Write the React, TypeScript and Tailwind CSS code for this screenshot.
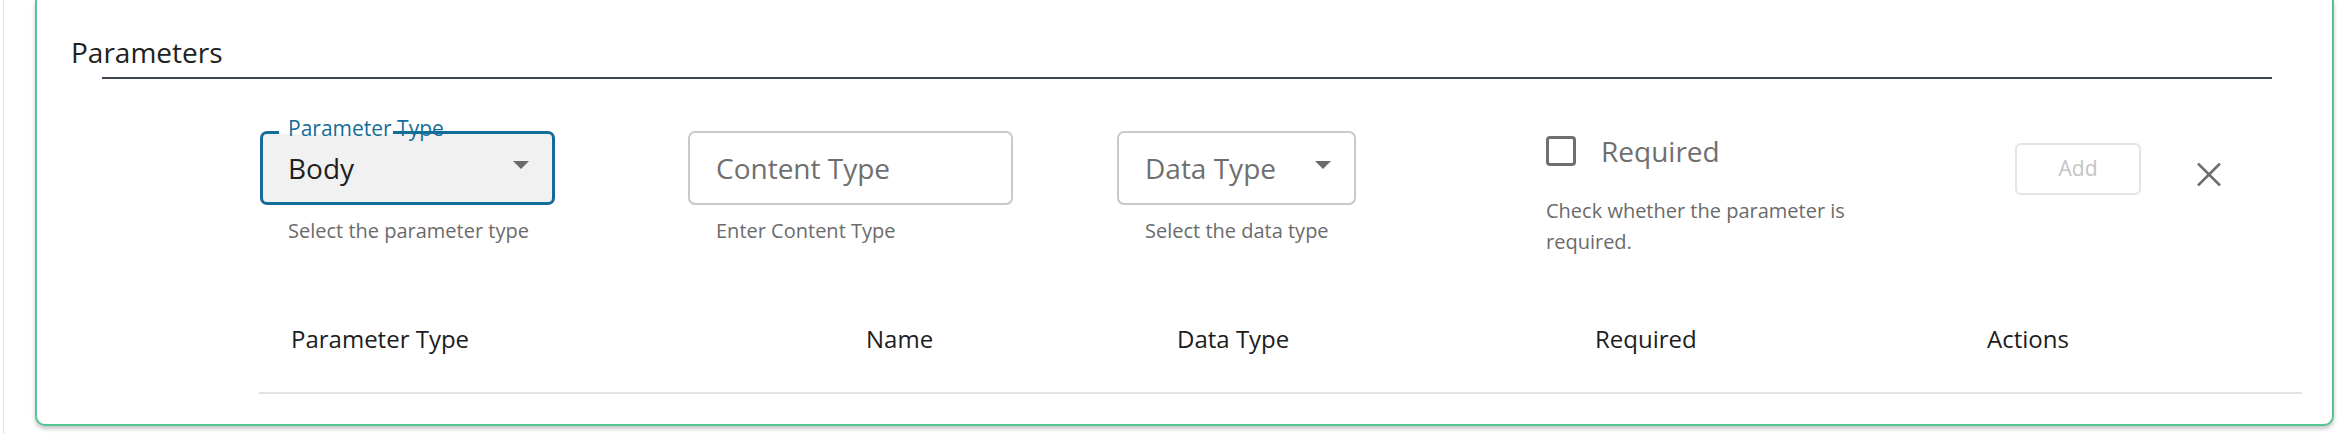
import type { ReactNode } from "react";

const FONT = "font-['Open_Sans',sans-serif]";

function Caret() {
	return (
		<svg width="16" height="8" viewBox="0 0 16 8" className="-mt-[6px] shrink-0">
			<path d="M0 0h16L8 8z" fill="#6b6b6b" />
		</svg>
	);
}

function CloseIcon() {
	return (
		<svg width="24" height="23" viewBox="0 0 24 23" className="shrink-0">
			<path d="M1 0.5 23 22.5M23 0.5 1 22.5" stroke="#6e6e6e" strokeWidth="2.6" fill="none" />
		</svg>
	);
}

function Helper({ children }: { children: ReactNode }) {
	return <div className="mt-[12px] pl-[28px] text-[20px] leading-[27px] text-[#6b6b6b] whitespace-nowrap">{children}</div>;
}

const columns = ["Parameter Type", "Name", "Data Type", "Required", "Actions"];

export default function App() {
	return (
		<div className={`${FONT} min-h-screen bg-white pl-[3px]`}>
			<div className="min-h-[434px] border-l border-[#e2e2e2]">
				<div className="ml-[31px] mr-[14px] rounded-b-[10px] border-x-2 border-b-2 border-[#55c592] bg-white pb-[30px] shadow-[0_3px_4px_rgba(0,0,0,0.22)]">
					<div className="pt-[33px] pl-[34px] text-[28px] leading-[38px] text-[#212121]">Parameters</div>
					<div className="mt-[6px] ml-[65px] mr-[60px] h-[2px] bg-[#3f4751]" />

					<div className="mt-[52px] ml-[223px] flex items-start">
						<div className="w-[428px]">
							<div className="relative flex h-[74px] w-[295px] items-center justify-between rounded-[7px] border-[3px] border-[#146d99] bg-[#f1f1f1] pl-[25px] pr-[23px]">
								<span className="absolute -top-[3px] left-[16px] h-[3px] w-[114px] bg-white" />
								<span className="absolute -top-[20px] left-[25px] whitespace-nowrap text-[21px] leading-[29px] text-[#146d99]">
									Parameter Type
								</span>
								<span className="text-[28px] leading-[38px] text-[#1f1f1f]">Body</span>
								<Caret />
							</div>
							<Helper>Select the parameter type</Helper>
						</div>

						<div className="w-[429px]">
							<div className="flex h-[74px] w-[325px] items-center rounded-[7px] border-2 border-[#c9c9c9] pl-[26px]">
								<span className="text-[28px] leading-[38px] text-[#6f6f6f]">Content Type</span>
							</div>
							<Helper>Enter Content Type</Helper>
						</div>

						<div className="w-[429px]">
							<div className="flex h-[74px] w-[239px] items-center justify-between rounded-[7px] border-2 border-[#c9c9c9] pl-[26px] pr-[23px]">
								<span className="text-[28px] leading-[38px] text-[#6f6f6f]">Data Type</span>
								<Caret />
							</div>
							<Helper>Select the data type</Helper>
						</div>

						<div className="w-[469px]">
							<div className="mt-px flex items-center">
								<div className="h-[30px] w-[30px] rounded-[4px] border-[3px] border-[#6f6f6f]" />
								<span className="ml-[25px] text-[28px] leading-[38px] text-[#6f6f6f]">Required</span>
							</div>
							<div className="mt-[25px] w-[330px] text-[20px] leading-[31px] text-[#6b6b6b]">
								Check whether the parameter is required.
							</div>
						</div>

						<button
							type="button"
							className="mt-[12px] flex h-[52px] w-[126px] items-center justify-center rounded-[6px] border-2 border-[#e4e4e4] text-[21px] text-[#c4c4c4]"
						>
							Add
						</button>
						<div className="ml-[56px] mt-[32px]">
							<CloseIcon />
						</div>
					</div>

					<div className="mt-[66px] ml-[222px] mr-[30px] grid grid-cols-[575px_311px_418px_392px_1fr] border-b-2 border-[#e2e2e2] pb-[38px] pl-[32px] text-[24px] leading-[31px] text-[#1d1d1d]">
						{columns.map((c) => (
							<div key={c} className="whitespace-nowrap">
								{c}
							</div>
						))}
					</div>
				</div>
			</div>
		</div>
	);
}
